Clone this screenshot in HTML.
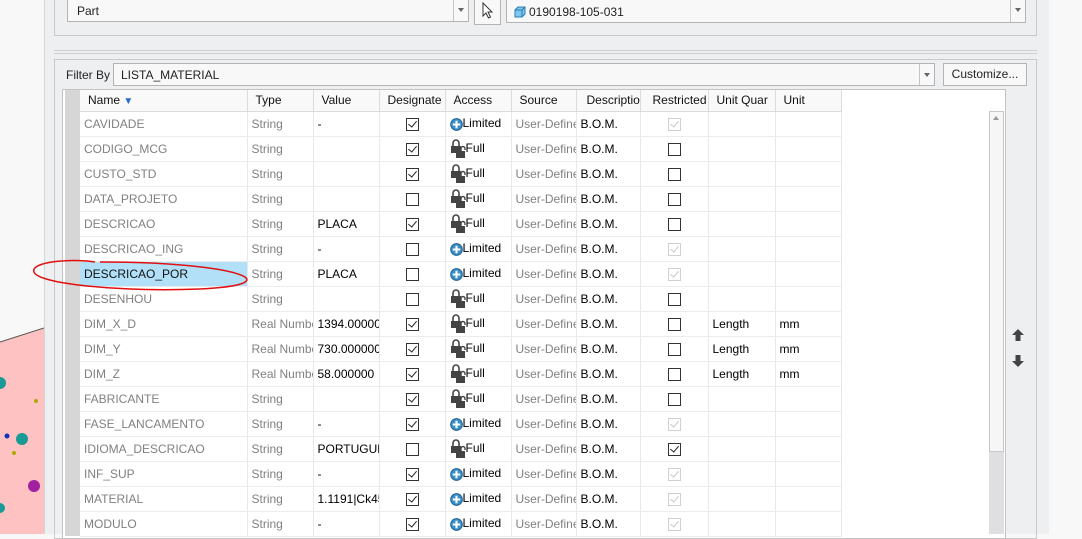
<!DOCTYPE html>
<html><head><meta charset="utf-8"><style>
*{margin:0;padding:0;box-sizing:border-box}
body{width:1082px;height:534px;overflow:hidden;position:relative;background:#f8f8f8;font-family:"Liberation Sans",sans-serif;font-size:12px;color:#000}
.a{position:absolute}
.dlg{left:44px;top:0;width:1005px;height:534px;background:#eeeff1;border-left:1px solid #d6d6d6}
.box{border:1px solid #c9c9c9}
.combo{background:#f8f8f8;border:1px solid #b4b4b4}
.dd{position:absolute;right:0;top:0;bottom:0;width:15px;border-left:1px solid #c4c4c4}
.dd:after{content:"";position:absolute;left:4px;top:9px;border-left:3.5px solid transparent;border-right:3.5px solid transparent;border-top:4px solid #666}
table{border-collapse:collapse;table-layout:fixed;width:776px;position:absolute;left:65px;top:90px;background:#fff}
td{height:25px;border-right:1px solid #e8e8e8;border-bottom:1px solid #ececec;white-space:nowrap;overflow:hidden;padding-left:4px;color:#808080;font-size:12px}
th{height:21px;font-weight:normal;text-align:left;padding-left:8px;background:#f9f9f9;border-right:1px solid #dcdcdc;border-bottom:1px solid #dcdcdc;white-space:nowrap;overflow:hidden;color:#111}
td.rh,th.rh{background:#d6d6d6;border:none;padding:0}
td.v,td.b{color:#000}
td.c{text-align:center;padding:0}
.cb{display:inline-block;width:13px;height:13px;border:1px solid #333;background:#fff;vertical-align:middle;position:relative}
.cb.k:after{content:"";position:absolute;left:3.5px;top:0.5px;width:4px;height:7px;border:solid #222;border-width:0 1.5px 1.5px 0;transform:rotate(40deg)}
.cb.g{border-color:#d0d0d0}
.cb.g:after{content:"";position:absolute;left:3.5px;top:0.5px;width:4px;height:7px;border:solid #c8c8c8;border-width:0 1px 1px 0;transform:rotate(40deg)}
.ac{color:#000;padding-left:4px}
.ac svg{vertical-align:middle}
</style></head><body>
<svg class="a" style="left:0;top:0" width="44" height="534"><polygon points="0,342 44,328 44,534 0,534" fill="#ffc2c2"/><line x1="0" y1="342" x2="44" y2="328" stroke="#555" stroke-width="1"/>
<circle cx="0" cy="383" r="6" fill="#1a9a96"/><circle cx="36" cy="401" r="2" fill="#aa0"/><circle cx="22" cy="439" r="6" fill="#1a9a96"/><circle cx="7" cy="436" r="2.5" fill="#1030c0"/><circle cx="14" cy="453" r="2" fill="#aa0"/><circle cx="34" cy="486" r="6" fill="#a020a0"/><circle cx="0" cy="508" r="5" fill="#1a9a96"/></svg>
<div class="a dlg"></div>
<div class="a" style="left:1049px;top:0;width:33px;height:534px;background:#f8f8f8"></div>
<div class="a box" style="left:54px;top:-2px;width:983px;height:38px"></div>
<div class="a combo" style="left:67px;top:-2px;width:402px;height:24px"><span class="a" style="left:9px;top:5px;color:#222">Part</span><div class="dd"></div></div>
<div class="a" style="left:474px;top:-2px;width:27px;height:27px;border:1px solid #b4b4b4;background:#f8f8f8"><svg class="a" style="left:6px;top:3px" width="14" height="18"><path d="M2 1 L2 14 L5 11 L7.5 16 L9.5 15 L7 10 L11 10 Z" fill="#fff" stroke="#333"/></svg></div>
<div class="a combo" style="left:506px;top:-2px;width:520px;height:25px"><svg class="a" style="left:7px;top:7px" width="12" height="12"><path d="M1 4 L4 1 L11 1 L11 8 L8 11 L1 11 Z" fill="#7cc8f0" stroke="#2a7cb0"/><path d="M1 4 L8 4 L8 11 M8 4 L11 1" fill="none" stroke="#2a7cb0"/></svg><span class="a" style="left:22px;top:6px;color:#222">0190198-105-031</span><div class="dd"></div></div>
<div class="a" style="left:54px;top:50px;width:983px;height:4px;border-top:1px solid #cfcfcf;border-bottom:1px solid #cfcfcf"></div>
<div class="a box" style="left:54px;top:59px;width:983px;height:480px"></div>
<span class="a" style="left:66px;top:68px;color:#222">Filter By</span>
<div class="a combo" style="left:113px;top:63px;width:822px;height:23px"><span class="a" style="left:7px;top:4px;color:#222">LISTA_MATERIAL</span><div class="dd"></div></div>
<div class="a" style="left:943px;top:63px;width:84px;height:23px;border:1px solid #b4b4b4;background:#f8f8f8;text-align:center;line-height:21px;color:#222">Customize...</div>
<div class="a" style="left:62px;top:89px;width:944px;height:450px;border:1px solid #c4c4c4;background:#fff"></div>
<svg width="0" height="0" style="position:absolute"><defs>
<symbol id="L" viewBox="0 0 16 20"><path d="M3 7 V4 a3 3 0 0 1 6 0 V7" fill="none" stroke="#444" stroke-width="1.6"/><rect x="1" y="7" width="10" height="7" fill="#444"/><rect x="6" y="12" width="9" height="7" fill="#444"/><path d="M11 12 V9.5 a2 2 0 0 1 4 0 V11" fill="none" stroke="#444" stroke-width="1.4"/></symbol>
<symbol id="P" viewBox="0 0 14 14"><circle cx="7" cy="7" r="6.3" fill="#3a8fc8" stroke="#1f5f90"/><path d="M7 3 V11 M3 7 H11" stroke="#fff" stroke-width="2.2"/></symbol></defs></svg>
<table>
<colgroup><col style="width:15px"><col style="width:167px"><col style="width:66px"><col style="width:66px"><col style="width:66px"><col style="width:66px"><col style="width:65px"><col style="width:64px"><col style="width:68px"><col style="width:67px"><col style="width:66px"></colgroup>
<tr><th class="rh"></th><th>Name <span style="color:#2a6ad0;font-size:10px">&#9660;</span></th><th>Type</th><th>Value</th><th style="padding-left:8px">Designate</th><th>Access</th><th>Source</th><th style="padding-left:10px">Descriptio</th><th style="padding-left:12px">Restricted</th><th>Unit Quar</th><th>Unit</th></tr>
<tr><td class="rh"></td><td>CAVIDADE</td><td>String</td><td class="v">-</td><td class="c"><span class="cb k"></span></td><td class="ac"><svg width="13" height="13"><use href="#P"/></svg>Limited</td><td>User-Defined</td><td class="b">B.O.M.</td><td class="c"><span class="cb g"></span></td><td></td><td></td></tr>
<tr><td class="rh"></td><td>CODIGO_MCG</td><td>String</td><td class="v"></td><td class="c"><span class="cb k"></span></td><td class="ac"><svg width="16" height="20"><use href="#L"/></svg>Full</td><td>User-Defined</td><td class="b">B.O.M.</td><td class="c"><span class="cb"></span></td><td></td><td></td></tr>
<tr><td class="rh"></td><td>CUSTO_STD</td><td>String</td><td class="v"></td><td class="c"><span class="cb k"></span></td><td class="ac"><svg width="16" height="20"><use href="#L"/></svg>Full</td><td>User-Defined</td><td class="b">B.O.M.</td><td class="c"><span class="cb"></span></td><td></td><td></td></tr>
<tr><td class="rh"></td><td>DATA_PROJETO</td><td>String</td><td class="v"></td><td class="c"><span class="cb"></span></td><td class="ac"><svg width="16" height="20"><use href="#L"/></svg>Full</td><td>User-Defined</td><td class="b">B.O.M.</td><td class="c"><span class="cb"></span></td><td></td><td></td></tr>
<tr><td class="rh"></td><td>DESCRICAO</td><td>String</td><td class="v">PLACA</td><td class="c"><span class="cb k"></span></td><td class="ac"><svg width="16" height="20"><use href="#L"/></svg>Full</td><td>User-Defined</td><td class="b">B.O.M.</td><td class="c"><span class="cb"></span></td><td></td><td></td></tr>
<tr><td class="rh"></td><td>DESCRICAO_ING</td><td>String</td><td class="v">-</td><td class="c"><span class="cb"></span></td><td class="ac"><svg width="13" height="13"><use href="#P"/></svg>Limited</td><td>User-Defined</td><td class="b">B.O.M.</td><td class="c"><span class="cb g"></span></td><td></td><td></td></tr>
<tr><td class="rh"></td><td style="background:#b1e0f8;color:#111">DESCRICAO_POR</td><td>String</td><td class="v">PLACA</td><td class="c"><span class="cb"></span></td><td class="ac"><svg width="13" height="13"><use href="#P"/></svg>Limited</td><td>User-Defined</td><td class="b">B.O.M.</td><td class="c"><span class="cb g"></span></td><td></td><td></td></tr>
<tr><td class="rh"></td><td>DESENHOU</td><td>String</td><td class="v"></td><td class="c"><span class="cb"></span></td><td class="ac"><svg width="16" height="20"><use href="#L"/></svg>Full</td><td>User-Defined</td><td class="b">B.O.M.</td><td class="c"><span class="cb"></span></td><td></td><td></td></tr>
<tr><td class="rh"></td><td>DIM_X_D</td><td>Real Number</td><td class="v">1394.000000</td><td class="c"><span class="cb k"></span></td><td class="ac"><svg width="16" height="20"><use href="#L"/></svg>Full</td><td>User-Defined</td><td class="b">B.O.M.</td><td class="c"><span class="cb"></span></td><td class="v">Length</td><td class="v">mm</td></tr>
<tr><td class="rh"></td><td>DIM_Y</td><td>Real Number</td><td class="v">730.000000</td><td class="c"><span class="cb k"></span></td><td class="ac"><svg width="16" height="20"><use href="#L"/></svg>Full</td><td>User-Defined</td><td class="b">B.O.M.</td><td class="c"><span class="cb"></span></td><td class="v">Length</td><td class="v">mm</td></tr>
<tr><td class="rh"></td><td>DIM_Z</td><td>Real Number</td><td class="v">58.000000</td><td class="c"><span class="cb k"></span></td><td class="ac"><svg width="16" height="20"><use href="#L"/></svg>Full</td><td>User-Defined</td><td class="b">B.O.M.</td><td class="c"><span class="cb"></span></td><td class="v">Length</td><td class="v">mm</td></tr>
<tr><td class="rh"></td><td>FABRICANTE</td><td>String</td><td class="v"></td><td class="c"><span class="cb k"></span></td><td class="ac"><svg width="16" height="20"><use href="#L"/></svg>Full</td><td>User-Defined</td><td class="b">B.O.M.</td><td class="c"><span class="cb"></span></td><td></td><td></td></tr>
<tr><td class="rh"></td><td>FASE_LANCAMENTO</td><td>String</td><td class="v">-</td><td class="c"><span class="cb k"></span></td><td class="ac"><svg width="13" height="13"><use href="#P"/></svg>Limited</td><td>User-Defined</td><td class="b">B.O.M.</td><td class="c"><span class="cb g"></span></td><td></td><td></td></tr>
<tr><td class="rh"></td><td>IDIOMA_DESCRICAO</td><td>String</td><td class="v">PORTUGUES</td><td class="c"><span class="cb"></span></td><td class="ac"><svg width="16" height="20"><use href="#L"/></svg>Full</td><td>User-Defined</td><td class="b">B.O.M.</td><td class="c"><span class="cb k"></span></td><td></td><td></td></tr>
<tr><td class="rh"></td><td>INF_SUP</td><td>String</td><td class="v">-</td><td class="c"><span class="cb k"></span></td><td class="ac"><svg width="13" height="13"><use href="#P"/></svg>Limited</td><td>User-Defined</td><td class="b">B.O.M.</td><td class="c"><span class="cb g"></span></td><td></td><td></td></tr>
<tr><td class="rh"></td><td>MATERIAL</td><td>String</td><td class="v">1.1191|Ck45</td><td class="c"><span class="cb k"></span></td><td class="ac"><svg width="13" height="13"><use href="#P"/></svg>Limited</td><td>User-Defined</td><td class="b">B.O.M.</td><td class="c"><span class="cb g"></span></td><td></td><td></td></tr>
<tr><td class="rh"></td><td>MODULO</td><td>String</td><td class="v">-</td><td class="c"><span class="cb k"></span></td><td class="ac"><svg width="13" height="13"><use href="#P"/></svg>Limited</td><td>User-Defined</td><td class="b">B.O.M.</td><td class="c"><span class="cb g"></span></td><td></td><td></td></tr>
</table>
<div class="a" style="left:989px;top:111px;width:15px;height:423px;background:#dfdfe1"></div>
<div class="a" style="left:989px;top:111px;width:15px;height:341px;background:#f6f6f6;border:1px solid #c8c8c8"></div>
<div class="a" style="left:993px;top:116px;border-left:3.5px solid transparent;border-right:3.5px solid transparent;border-bottom:4px solid #999"></div>
<svg class="a" style="left:1011px;top:328px" width="14" height="40"><path d="M7 1 L13 7 L9.5 7 L9.5 13 L4.5 13 L4.5 7 L1 7 Z" fill="#444"/><path d="M7 39 L13 33 L9.5 33 L9.5 27 L4.5 27 L4.5 33 L1 33 Z" fill="#444"/></svg>
<svg class="a" style="left:0;top:0;pointer-events:none" width="1082" height="534"><path d="M95 262 C70 258 30 262 34 272 C38 284 120 292 200 289 C240 287 252 282 245 277 C230 268 170 262 100 262" fill="none" stroke="#e01010" stroke-width="1.5"/></svg>
</body></html>
